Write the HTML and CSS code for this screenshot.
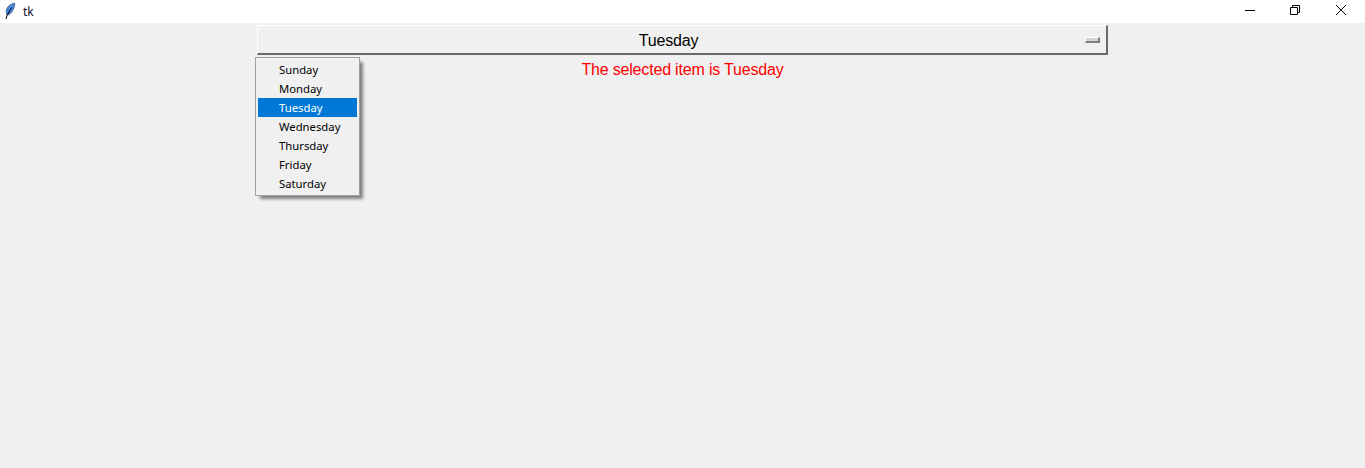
FILE: index.html
```html
<!DOCTYPE html>
<html lang="en">
<head>
    <meta charset="UTF-8">
    <title>tk</title>
    <link rel="stylesheet" href="styles.css">
</head>
<body>
    <div class="titlebar">
        <svg class="feather" width="12" height="19" viewBox="0 0 12 19">
            <path d="M10.8 1.2C7 1.5 2.5 4.5 2.2 9.5C2.2 11 2.6 12.5 3.4 13.2C7.5 12 10.5 7 10.8 1.2Z" fill="#4a8ae0" stroke="#1d3f78" stroke-width="0.7"/>
            <path d="M7.5 5.5L3 13.5L2 17" fill="none" stroke="#000" stroke-width="1"/>
        </svg>
        <span class="title">tk</span>
        <div class="controls">
            <svg class="ctl" width="12" height="12" viewBox="0 0 12 12"><path d="M2 6.5H12" stroke="#000" fill="none"/></svg>
            <svg class="ctl" width="12" height="12" viewBox="0 0 12 12"><path d="M1.5 3.5H8.5V10.5H1.5ZM3.5 3.5V1.5H10.5V8.5H8.5" stroke="#000" fill="none"/></svg>
            <svg class="ctl" width="12" height="12" viewBox="0 0 12 12"><path d="M1 1L11 11M11 1L1 11" stroke="#000" fill="none"/></svg>
        </div>
    </div>

    <div class="content">
        <div class="optionmenu">
            <span>Tuesday</span>
            <i class="indicator"></i>
        </div>
        <div class="selected">The selected item is Tuesday</div>
    </div>

    <ul class="menu">
        <li>Sunday</li>
        <li>Monday</li>
        <li class="active">Tuesday</li>
        <li>Wednesday</li>
        <li>Thursday</li>
        <li>Friday</li>
        <li>Saturday</li>
    </ul>
</body>
</html>
```

FILE: styles.css
```css
html, body {
    margin: 0;
    height: 100%;
    overflow: hidden;
}
body {
    background: #f0f0f0;
    font-family: "Liberation Sans", Arial, sans-serif;
    color: #000;
}
.titlebar {
    height: 23px;
    background: #fff;
    display: flex;
    align-items: center;
    box-sizing: border-box;
    padding-left: 4px;
}
.title {
    font-family: "Noto Sans", sans-serif;
    font-size: 12px;
    margin-left: 7px;
    color: #101030;
}
.controls {
    margin-left: auto;
    display: flex;
    align-items: center;
    margin-top: -3px;
    margin-right: 18px;
    gap: 34px;
}
.content {
    display: flex;
    flex-direction: column;
    align-items: center;
    padding-top: 2px;
}
.optionmenu {
    box-sizing: border-box;
    width: 851px;
    height: 30px;
    padding-top: 2px;
    padding-right: 27px;
    border-top: 1px solid #fff;
    border-left: 1px solid #fff;
    border-right: 2px solid #696969;
    border-bottom: 2px solid #696969;
    display: flex;
    align-items: center;
    justify-content: center;
    font-size: 16px;
    letter-spacing: -0.2px;
    position: relative;
}
.indicator {
    position: absolute;
    right: 6px;
    top: 11px;
    width: 12px;
    height: 3px;
    background: #d4d4d4;
    border-top: 1px solid #fff;
    border-left: 1px solid #fff;
    border-right: 2px solid #808080;
    border-bottom: 2px solid #808080;
}
.selected {
    color: #f00;
    font-size: 16px;
    letter-spacing: -0.18px;
    line-height: 18px;
    margin-top: 6px;
}
.menu {
    position: absolute;
    left: 255px;
    top: 57px;
    width: 105px;
    height: 139px;
    box-sizing: border-box;
    margin: 0;
    padding: 2px;
    list-style: none;
    background: #f0f0f0;
    border: 1px solid #a0a0a0;
    box-shadow: 4px 4px 3px -1px #808080;
    font-family: "Noto Sans", sans-serif;
    font-size: 11.3px;
}
.menu li {
    height: 19px;
    line-height: 19px;
    padding-left: 21px;
}
.menu .active {
    background: #0078d7;
    color: #fff;
}
```
